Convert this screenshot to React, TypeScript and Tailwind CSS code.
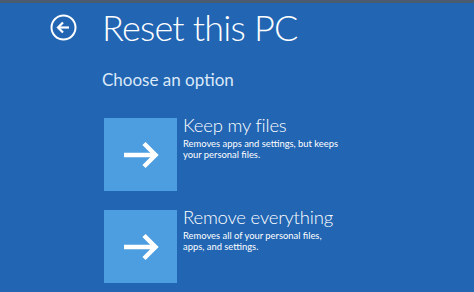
import React from "react";

function Arrow() {
  return (
    <svg width="38" height="28" viewBox="0 0 38 28" fill="none">
      <path d="M2 14H33" stroke="white" strokeWidth="4.5" strokeLinecap="butt" />
      <path d="M22 2.5L33.5 14L22 25.5" stroke="white" strokeWidth="4.5" strokeLinejoin="miter" />
    </svg>
  );
}

function Option({ title, lines }: { title: string; lines: string[] }) {
  return (
    <div className="flex items-start">
      <div className="w-[73px] h-[73px] bg-[#4c9ee0] flex items-center justify-center">
        <Arrow />
      </div>
      <div className="ml-[6px] -mt-[4px] text-white">
        <div className="text-[18.5px] leading-[22px] font-light tracking-[-0.2px]">{title}</div>
        <div className="text-[9.4px] leading-[11px] mt-[2px]">
          {lines.map((l) => (
            <div key={l}>{l}</div>
          ))}
        </div>
      </div>
    </div>
  );
}

export default function App() {
  return (
    <div
      className="w-[474px] h-[292px] bg-[#2165b3] border-t-[3px] border-[#4b5b70] overflow-hidden"
      style={{ fontFamily: 'Lato, "Open Sans", sans-serif' }}
    >
      <div className="flex items-center pl-[50px] pt-[2px]">
        <svg width="27" height="27" viewBox="0 0 27 27" fill="none">
          <circle cx="13.5" cy="13.5" r="12" stroke="white" strokeWidth="2" />
          <path d="M19 13.5H8.5" stroke="white" strokeWidth="2.2" />
          <path d="M13 8.5L8 13.5L13 18.5" stroke="white" strokeWidth="2.2" />
        </svg>
        <div className="ml-[25px] text-white text-[36px] leading-[44px] font-light tracking-[-0.8px]">Reset this PC</div>
      </div>
      <div className="pl-[102px] mt-[21px] text-[#dbe9f8] text-[17px] leading-[20px]">Choose an option</div>
      <div className="pl-[104px] mt-[28px] flex flex-col gap-[19px]">
        <Option
          title="Keep my files"
          lines={["Removes apps and settings, but keeps", "your personal files."]}
        />
        <Option
          title="Remove everything"
          lines={["Removes all of your personal files,", "apps, and settings."]}
        />
      </div>
    </div>
  );
}
